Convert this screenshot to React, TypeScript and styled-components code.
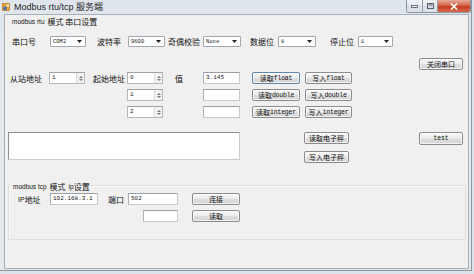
import React from 'react';
import styled, { createGlobalStyle } from 'styled-components';

const GlobalStyle = createGlobalStyle`
  html, body {
    margin: 0;
    padding: 0;
    background: #dde3ea;
  }
  body {
    width: 474px;
    height: 274px;
    overflow: hidden;
    font-family: "Noto Sans CJK SC", sans-serif;
  }
`;

const Window = styled.div`
  width: 472px;
  height: 271px;
  box-sizing: border-box;
  display: flex;
  flex-direction: column;
  background: linear-gradient(#dfe5ec, #e6eaef 30%, #e4e8ed);
  border-right: 1px solid #8f969e;
  border-bottom: 1px solid #8f969e;
`;

const TitleBar = styled.div`
  height: 14px;
  display: flex;
  align-items: flex-start;
  padding-left: 2px;
  flex-shrink: 0;
`;

const TitleText = styled.span`
  margin: 2px 0 0 4px;
  font-family: "Liberation Sans", "Noto Sans CJK SC", sans-serif;
  font-size: 9px;
  line-height: 10px;
  color: #1e1e1e;
`;

const Controls = styled.div`
  margin-left: auto;
  display: flex;
  height: 12px;
  border: 1px solid #8a94a0;
  border-top: none;
  border-radius: 0 0 3px 3px;
  overflow: hidden;
`;

const CtrlBtn = styled.div<{ $w: number; $close?: boolean }>`
  width: ${(p) => p.$w}px;
  display: flex;
  align-items: center;
  justify-content: center;
  background: ${(p) =>
    p.$close
      ? 'linear-gradient(#eaa99a, #d4654c 45%, #c43c22 55%, #d86a4a)'
      : 'linear-gradient(#f2f4f7, #e3e8ee 45%, #d7dde5 55%, #e0e5eb)'};
  & + & {
    border-left: 1px solid #959fab;
  }
`;

const Client = styled.div`
  flex: 1;
  margin: 0 2px 1px 4px;
  background: #f0f0f0;
  border: 1px solid #a7afb8;
  display: flex;
  flex-direction: column;
`;

const Caption = styled.div`
  margin: 2px 0 0 7px;
  height: 9px;
  display: flex;
  align-items: center;
  font-family: "Noto Sans CJK SC", sans-serif;
  font-size: 8px;
  color: #111;
  white-space: nowrap;
`;

const Latin = styled.span<{ $size?: number; $gap?: number; $lead?: number }>`
  font-family: "Liberation Sans", sans-serif;
  font-size: ${(p) => p.$size ?? 6.5}px;
  margin-left: ${(p) => p.$lead ?? 0}px;
  margin-right: ${(p) => p.$gap ?? 0}px;
`;

const Row = styled.div<{ $mt: number; $h?: number; $ml?: number }>`
  display: flex;
  align-items: center;
  margin-top: ${(p) => p.$mt}px;
  margin-left: ${(p) => p.$ml ?? 0}px;
  height: ${(p) => p.$h ?? 12}px;
  flex-shrink: 0;
`;

const Label = styled.span<{ $w: number; $ml?: number; $pl?: number }>`
  display: inline-flex;
  align-items: center;
  box-sizing: border-box;
  width: ${(p) => p.$w}px;
  margin-left: ${(p) => p.$ml ?? 0}px;
  padding-left: ${(p) => p.$pl ?? 0}px;
  font-family: "Noto Sans CJK SC", sans-serif;
  font-size: 8px;
  color: #111;
  white-space: nowrap;
`;

const Combo = styled.div<{ $w: number }>`
  width: ${(p) => p.$w}px;
  height: 11px;
  box-sizing: border-box;
  border: 1px solid #a0a7b0;
  border-radius: 1px;
  background: #fff;
  display: flex;
  align-items: center;
  justify-content: space-between;
  padding: 0 3px 0 2px;
  font-family: "Liberation Mono", monospace;
  font-size: 5.5px;
  color: #222;
`;

const TextBox = styled.div<{ $w: number; $h?: number; $ml?: number }>`
  width: ${(p) => p.$w}px;
  height: ${(p) => p.$h ?? 12}px;
  margin-left: ${(p) => p.$ml ?? 0}px;
  box-sizing: border-box;
  border: 1px solid #c5c9cf;
  border-top-color: #9aa0a8;
  border-left-color: #aeb3ba;
  background: #fff;
  padding: 1px 0 0 2px;
  font-family: "Liberation Mono", monospace;
  font-size: 6px;
  line-height: 7px;
  color: #222;
  flex-shrink: 0;
`;

const Spin = styled.div`
  width: 36px;
  height: 12px;
  box-sizing: border-box;
  border: 1px solid #b3b8bf;
  border-top-color: #9ca2aa;
  background: #fff;
  display: flex;
  font-family: "Liberation Mono", monospace;
  font-size: 6px;
  color: #222;
`;

const SpinValue = styled.span`
  flex: 1;
  padding: 1px 0 0 2px;
  line-height: 7px;
`;

const SpinArrows = styled.div`
  width: 7px;
  display: flex;
  flex-direction: column;
  align-items: center;
  justify-content: center;
  gap: 1px;
  background: #f2f2f2;
  border-left: 1px solid #dadada;
`;

const Button = styled.button<{ $w: number; $h?: number; $ml?: number; $focus?: boolean }>`
  width: ${(p) => p.$w}px;
  height: ${(p) => p.$h ?? 12}px;
  box-sizing: border-box;
  padding: 0;
  margin: 0 0 0 ${(p) => p.$ml ?? 0}px;
  border: 1px solid ${(p) => (p.$focus ? '#5f86ad' : '#8c8c8c')};
  border-radius: 2px;
  background: linear-gradient(#f7f7f7, #ececec 48%, #dedede 52%, #d4d4d4);
  box-shadow: inset 0 0 0 1px rgba(255, 255, 255, 0.7);
  display: flex;
  align-items: center;
  justify-content: center;
  font-family: "Noto Sans CJK SC", sans-serif;
  font-size: 7px;
  color: #111;
  white-space: nowrap;
  justify-self: end;
`;

const Mono = styled.span`
  font-family: "Liberation Mono", monospace;
  font-size: 6.5px;
  letter-spacing: -0.2px;
`;

const CloseRow = styled.div`
  display: flex;
  margin: 11px 0 0 414px;
`;

const Grid = styled.div`
  display: grid;
  margin: 2px 0 0 5px;
  grid-template-columns: 39px 36px 42px 36px 40px 37px 60px 52px;
  grid-auto-rows: 12px;
  row-gap: 5px;
  align-items: center;
`;

const Slot = styled.div``;

const Lower = styled.div`
  display: flex;
  align-items: flex-start;
  margin: 14px 0 0 3px;
  height: 31px;
`;

const Memo = styled.div`
  width: 232px;
  height: 28px;
  box-sizing: border-box;
  background: #fff;
  border: 1px solid #c9ccd0;
  border-top: 1px solid #8b9097;
  border-left: 1px solid #8b9097;
`;

const ButtonColumn = styled.div`
  display: flex;
  flex-direction: column;
  gap: 7px;
  margin-left: 64px;
`;

const Group = styled.div`
  margin: 22px 2px 0 3px;
  border: 1px solid #dedede;
  box-shadow: inset 1px 1px 0 #fafafa;
  border-radius: 2px;
  padding-bottom: 17px;
`;

const GroupCaption = styled(Caption)`
  margin: -5px 0 0 3px;
  height: 10px;
  padding: 0 1px;
  width: fit-content;
  background: #f0f0f0;
`;

const AppIcon = () => (
  <svg width="8" height="8" viewBox="0 0 8 8" style={{ marginTop: 3 }}>
    <rect x="0.5" y="0.5" width="7" height="7" fill="#f0a030" stroke="#b06a10" strokeWidth="0.6" />
    <rect x="1.5" y="3.5" width="3" height="3.5" fill="#3b72c4" />
    <rect x="4.5" y="1.5" width="2.5" height="2" fill="#fff4d0" />
  </svg>
);

const Arrow = () => (
  <svg width="5" height="3" viewBox="0 0 5 3">
    <polygon points="0,0 5,0 2.5,3" fill="#222" />
  </svg>
);

const SpinBox = ({ value }: { value: string }) => (
  <Spin>
    <SpinValue>{value}</SpinValue>
    <SpinArrows>
      <svg width="4" height="2" viewBox="0 0 4 2">
        <polygon points="0,2 4,2 2,0" fill="#777" />
      </svg>
      <svg width="4" height="2" viewBox="0 0 4 2">
        <polygon points="0,0 4,0 2,2" fill="#777" />
      </svg>
    </SpinArrows>
  </Spin>
);

const BtnLabel = ({ cn, en }: { cn: string; en?: string }) => (
  <>
    {cn}
    {en && <Mono>{en}</Mono>}
  </>
);

const serialFields = [
  { label: '串口号', lw: 38, ml: 0, value: 'COM2', cw: 36 },
  { label: '波特率', lw: 31, ml: 11, value: '9600', cw: 37 },
  { label: '奇偶校验', lw: 35, ml: 3, value: 'None', cw: 38 },
  { label: '数据位', lw: 28, ml: 9, value: '8', cw: 38 },
  { label: '停止位', lw: 28, ml: 14, value: '1', cw: 35 },
];

const registerRows = [
  { start: '0', value: '3.145', type: 'float' },
  { start: '1', value: '', type: 'double' },
  { start: '2', value: '', type: 'integer' },
];

export default function App() {
  return (
    <>
      <GlobalStyle />
      <Window>
        <TitleBar>
          <AppIcon />
          <TitleText>Modbus rtu/tcp 服务端</TitleText>
          <Controls>
            <CtrlBtn $w={15}>
              <svg width="7" height="3" viewBox="0 0 7 3">
                <rect x="0.5" y="0.5" width="6" height="2" fill="#fff" stroke="#4a5360" strokeWidth="0.8" />
              </svg>
            </CtrlBtn>
            <CtrlBtn $w={14}>
              <svg width="7" height="6" viewBox="0 0 7 6">
                <rect x="0.5" y="0.5" width="6" height="5" fill="none" stroke="#4a5360" strokeWidth="0.9" />
                <rect x="1.5" y="1.5" width="4" height="1" fill="#4a5360" />
              </svg>
            </CtrlBtn>
            <CtrlBtn $w={32} $close>
              <svg width="8" height="7" viewBox="0 0 8 7">
                <path d="M1 0.5 L7 6.5 M7 0.5 L1 6.5" stroke="#fff" strokeWidth="1.6" />
              </svg>
            </CtrlBtn>
          </Controls>
        </TitleBar>

        <Client>
          <Caption>
            <Latin $gap={3}>modbus rtu</Latin>模式 串口设置
          </Caption>

          <Row $mt={10} $h={11} $ml={7}>
            {serialFields.map((f) => (
              <React.Fragment key={f.label}>
                <Label $w={f.lw} $ml={f.ml}>
                  {f.label}
                </Label>
                <Combo $w={f.cw}>
                  <span>{f.value}</span>
                  <Arrow />
                </Combo>
              </React.Fragment>
            ))}
          </Row>

          <CloseRow>
            <Button $w={44}>关闭串口</Button>
          </CloseRow>

          <Grid>
            {registerRows.map((r, i) => (
              <React.Fragment key={r.type}>
                {i === 0 ? <Label $w={39}>从站地址</Label> : <Slot />}
                {i === 0 ? <SpinBox value="1" /> : <Slot />}
                {i === 0 ? (
                  <Label $w={42} $pl={8}>
                    起始地址
                  </Label>
                ) : (
                  <Slot />
                )}
                <SpinBox value={r.start} />
                {i === 0 ? (
                  <Label $w={40} $pl={12}>
                    值
                  </Label>
                ) : (
                  <Slot />
                )}
                <TextBox $w={37}>{r.value}</TextBox>
                <Button $w={48} $focus={i === 0}>
                  <BtnLabel cn="读取" en={r.type} />
                </Button>
                <Button $w={47}>
                  <BtnLabel cn="写入" en={r.type} />
                </Button>
              </React.Fragment>
            ))}
          </Grid>

          <Lower>
            <Memo />
            <ButtonColumn>
              <Button $w={45}>读取电子秤</Button>
              <Button $w={45}>写入电子秤</Button>
            </ButtonColumn>
            <Button $w={44} $h={13} $ml={70}>
              <Mono>test</Mono>
            </Button>
          </Lower>

          <Group>
            <GroupCaption>
              <Latin $gap={3}>modbus tcp</Latin>模式<Latin $lead={3}>ip</Latin>设置
            </GroupCaption>
            <Row $mt={2}>
              <Label $w={32} $ml={9}>
                <Latin $size={7}>IP</Latin>地址
              </Label>
              <TextBox $w={48}>192.168.3.1</TextBox>
              <Label $w={20} $ml={10}>
                端口
              </Label>
              <TextBox $w={50}>502</TextBox>
              <Button $w={48} $ml={14}>
                连接
              </Button>
            </Row>
            <Row $mt={5}>
              <TextBox $w={35} $ml={134} />
              <Button $w={48} $ml={14}>
                读取
              </Button>
            </Row>
          </Group>
        </Client>
      </Window>
    </>
  );
}
